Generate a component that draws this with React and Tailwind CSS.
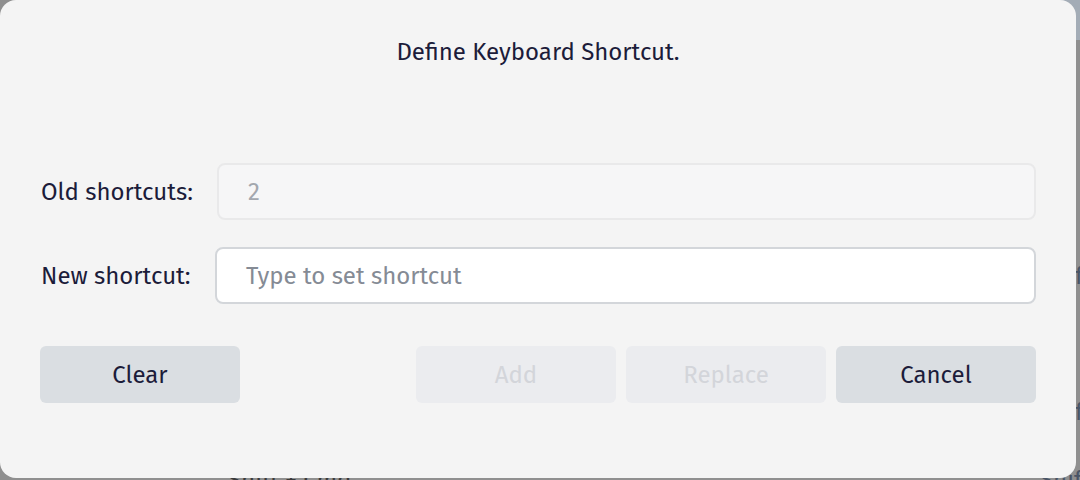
import React from "react";

export default function App() {
  const font = { fontFamily: '"Fira Sans", "Open Sans", "Noto Sans", sans-serif' };
  return (
    <div className="relative w-[1080px] h-[480px] overflow-hidden bg-[#8f8f8f]" style={font}>
      <div className="absolute right-0 top-0 w-[20px] h-[40px] bg-[#a3acb6]" />
      <div className="absolute left-[1075px] top-[258px] text-[24px] text-[#4a5566]">f</div>
      <div className="absolute left-[1075px] top-[394px] text-[24px] text-[#4a5566]">f</div>
      <div className="absolute left-[1040px] top-[462px] text-[24px] text-[#4a5566]">Shif</div>
      <div className="absolute left-[228px] top-[462px] text-[24px] text-[#3a3a3a]">Shift + Cmd</div>

      <div className="relative w-[1076px] h-[478px] rounded-[16px] bg-[#f4f4f4] px-10 pt-[36px] text-[#1c1c3a]">
        <div className="text-center text-[24px] leading-[32px]">Define Keyboard Shortcut.</div>

        <div className="mt-[95px] flex flex-col gap-[27px]">
          <div className="flex items-center">
            <div className="w-[177px] shrink-0 text-[24px] pl-[1px]">Old shortcuts:</div>
            <div className="flex-1 h-[57px] rounded-[8px] border-2 border-[#e9e9ea] bg-[#f6f6f7] flex items-center pl-[29px] text-[24px] text-[#a3a7ae]">
              2
            </div>
          </div>
          <div className="flex items-center">
            <div className="w-[175px] shrink-0 text-[24px] pl-[1px]">New shortcut:</div>
            <div className="flex-1 h-[57px] rounded-[8px] border-2 border-[#d3d6da] bg-white flex items-center pl-[29px] text-[24px] text-[#858b95]">
              Type to set shortcut
            </div>
          </div>
        </div>

        <div className="mt-[42px] flex justify-between">
          <button className="w-[200px] h-[57px] rounded-[6px] bg-[#dadee2] text-[24px] text-[#1c1c3a]">Clear</button>
          <div className="flex gap-[10px]">
            <button className="w-[200px] h-[57px] rounded-[6px] bg-[#ebecef] text-[24px] text-[#d3d5da]">Add</button>
            <button className="w-[200px] h-[57px] rounded-[6px] bg-[#ebecef] text-[24px] text-[#d3d5da]">Replace</button>
            <button className="w-[200px] h-[57px] rounded-[6px] bg-[#dadee2] text-[24px] text-[#1c1c3a]">Cancel</button>
          </div>
        </div>
      </div>
    </div>
  );
}
